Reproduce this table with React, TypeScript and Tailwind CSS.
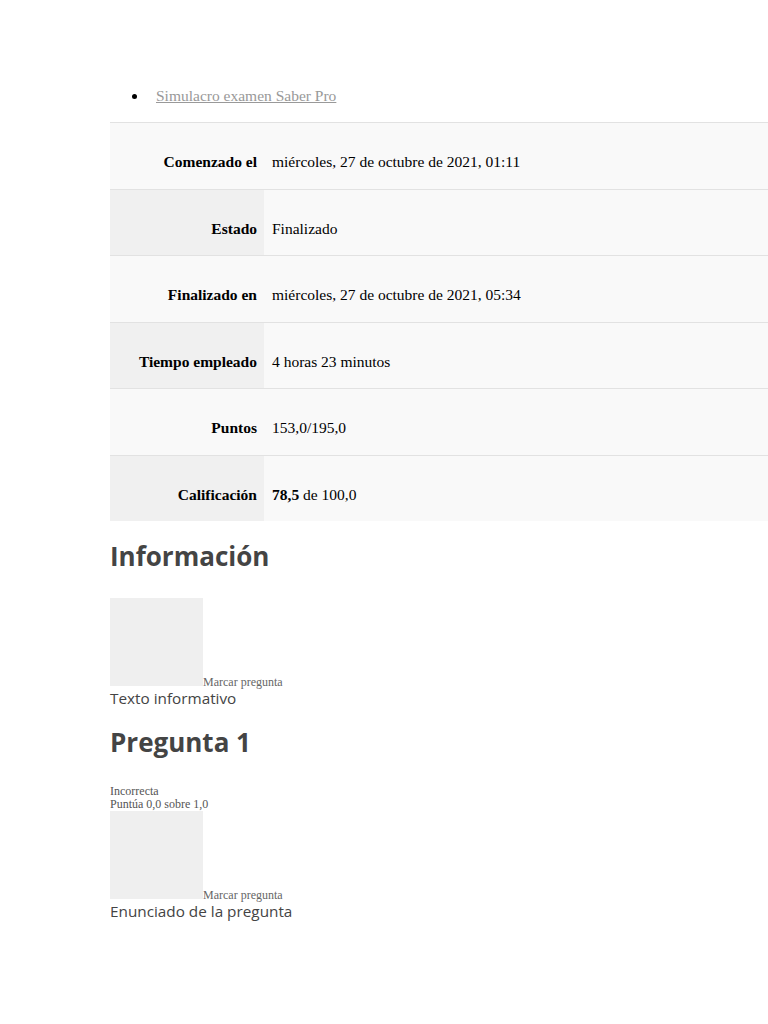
const serif = { fontFamily: '"Liberation Serif", "Times New Roman", serif' };
const sans = { fontFamily: '"Open Sans", "Lato", sans-serif' };

const rows: { label: string; value: React.ReactNode; shaded: boolean }[] = [
  { label: "Comenzado el", value: "miércoles, 27 de octubre de 2021, 01:11", shaded: false },
  { label: "Estado", value: "Finalizado", shaded: true },
  { label: "Finalizado en", value: "miércoles, 27 de octubre de 2021, 05:34", shaded: false },
  { label: "Tiempo empleado", value: "4 horas 23 minutos", shaded: true },
  { label: "Puntos", value: "153,0/195,0", shaded: false },
  {
    label: "Calificación",
    value: (
      <span>
        <b>78,5</b> de 100,0
      </span>
    ),
    shaded: true,
  },
];

function MarkBox() {
  return (
    <div className="leading-[13px]">
      <span className="inline-block w-[93px] h-[88px] bg-[#efefef] align-baseline" />
      <span className="text-[12px] text-[#666]" style={serif}>
        Marcar pregunta
      </span>
    </div>
  );
}

export default function App() {
  return (
    <div className="bg-white min-h-screen pl-[110px] pt-[87px] pb-20" style={sans}>
      <div className="flex items-center text-[15.5px] leading-[18px]" style={serif}>
        <span className="ml-[22px] w-[5px] h-[5px] rounded-full bg-black" />
        <a href="#" className="ml-[19px] text-[#999] underline">Simulacro examen Saber Pro</a>
      </div>

      <div className="mt-[17px] text-[15.5px] text-black" style={serif}>
        {rows.map((r) => (
          <div key={r.label} className="flex h-[66.5px] border-t border-[#e2e2e2] bg-[#f9f9f9]">
            <div
              className={`w-[154px] shrink-0 flex items-center justify-end pr-[7px] pt-[12px] font-bold ${
                r.shaded ? "bg-[#f0f0f0]" : ""
              }`}
            >
              {r.label}
            </div>
            <div className="flex items-center pl-[8px] pt-[12px]">{r.value}</div>
          </div>
        ))}
      </div>

      <h2 className="mt-[18px] text-[26px] leading-[34px] font-bold text-[#444]">Información</h2>
      <div className="mt-[25px]">
        <MarkBox />
        <p className="text-[15.3px] leading-[18px] text-[#444]">Texto informativo</p>
      </div>

      <h2 className="mt-[18px] text-[26px] leading-[34px] font-bold text-[#444]">Pregunta 1</h2>
      <div className="mt-[26px] text-[12px] leading-[13px] text-[#555]" style={serif}>
        <div>Incorrecta</div>
        <div>Puntúa 0,0 sobre 1,0</div>
      </div>
      <MarkBox />
      <p className="text-[15.3px] leading-[18px] text-[#444]">Enunciado de la pregunta</p>
    </div>
  );
}
